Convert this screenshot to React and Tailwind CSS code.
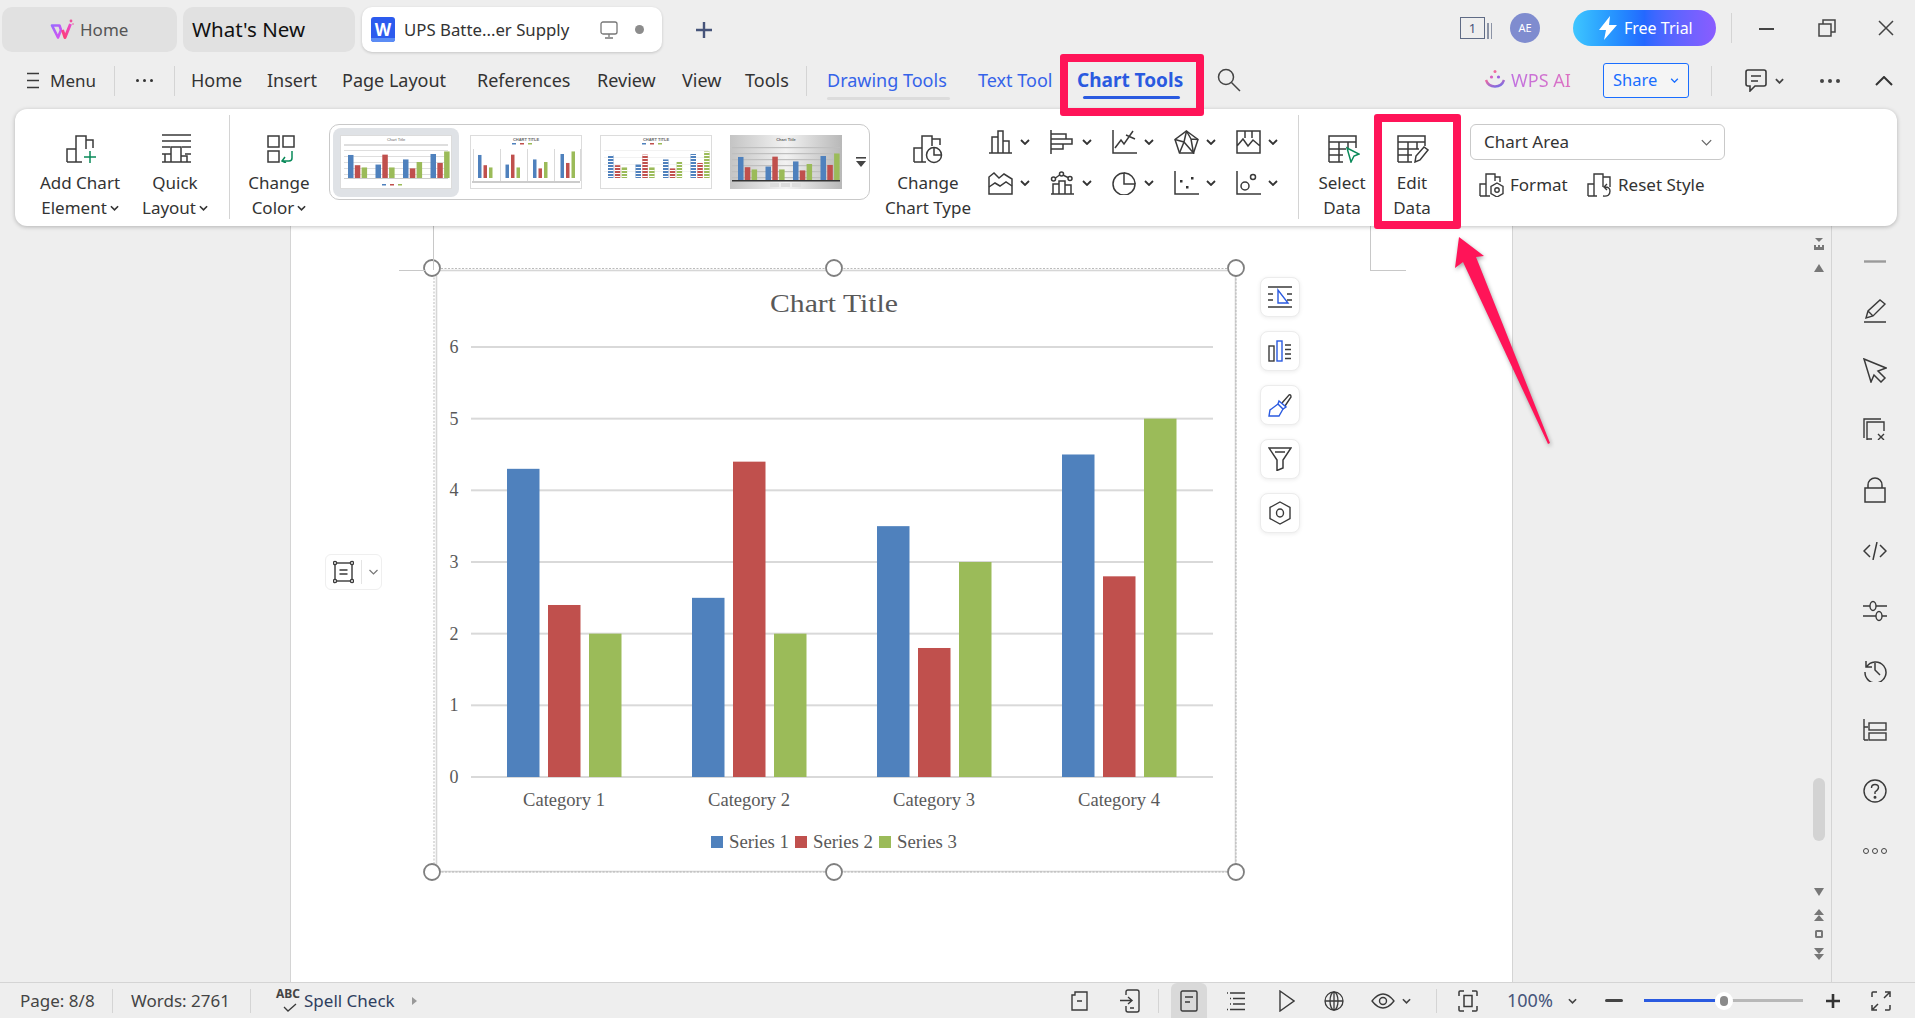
import React from "react";

const S = ({ w, h, children, className = "", stroke = "#3a3a3a", sw = 1.5 }) => (
  <svg width={w} height={h} viewBox={`0 0 ${w} ${h}`} fill="none" stroke={stroke} strokeWidth={sw} className={"shrink-0 " + className}>
    {children}
  </svg>
);
const Chev = ({ c = "#333", w = 10, h = 6, sw = 1.6 }) => (
  <svg width={w} height={h} viewBox="0 0 10 6" fill="none" stroke={c} strokeWidth={sw} className="shrink-0">
    <path d="M1 1l4 4 4-4" />
  </svg>
);

const Big = ({ w, icon, l1, l2, chev }) => (
  <div className={`flex flex-col items-center shrink-0 ${w}`}>
    <div className="h-[36px] flex items-center justify-center">{icon}</div>
    <div className="mt-[3px] text-center leading-[25px] whitespace-nowrap">{l1}</div>
    <div className="flex items-center justify-center gap-[3px] leading-[25px] whitespace-nowrap">
      {l2}
      {chev && <Chev w={9} h={6} sw={1.8} />}
    </div>
  </div>
);

const bars = [
  [0.72, 0.4, 0.33],
  [0.42, 0.73, 0.33],
  [0.58, 0.3, 0.5],
  [0.75, 0.47, 0.83],
];
const Mini = ({ kind }) => {
  const W = 112;
  const H = 54;
  const base = kind === 4 ? 45 : 43;
  const maxH = 32;
  return (
    <svg width={W} height={H} viewBox={`0 0 ${W} ${H}`} className="shrink-0">
      {kind === 4 ? (
        <>
          <defs>
            <linearGradient id="mg" x1="0" y1="0" x2="1" y2="0">
              <stop offset="0" stopColor="#c4c4c4" />
              <stop offset="0.5" stopColor="#f2f2f2" />
              <stop offset="1" stopColor="#b8b8b8" />
            </linearGradient>
          </defs>
          <rect width={W} height={H} fill="url(#mg)" />
        </>
      ) : (
        <rect x="0.5" y="0.5" width={W - 1} height={H - 1} fill="#fff" stroke="#dcdcdc" />
      )}
      <text x={W / 2} y="5.5" fontSize="4" textAnchor="middle" fill="#666" fontFamily="Liberation Sans" fontWeight={kind === 1 ? 400 : 700}>
        {kind === 1 || kind === 4 ? "Chart Title" : "CHART TITLE"}
      </text>
      {kind === 2 || kind === 3 ? (
        <g>
          <rect x="42" y="8" width="4" height="1.5" fill="#4f81bd" />
          <rect x="50" y="8" width="4" height="1.5" fill="#c0504d" />
          <rect x="58" y="8" width="4" height="1.5" fill="#9bbb59" />
        </g>
      ) : null}
      {kind === 1 && [9, 15, 21, 27, 33, 39].map((y) => <rect key={y} x="4" y={y} width={W - 8} height={y < 15 ? 2 : 1} fill="#dedede" />)}
      {kind === 3 && [15, 22, 29, 36].map((y) => <rect key={y} x="4" y={y} width={W - 8} height="0.5" fill="#e4e4e4" />)}
      {kind === 4 && [12, 18, 24, 30, 36, 42].map((y) => <rect key={y} x="2" y={y} width={W - 4} height="1.2" fill="#bfbfbf" />)}
      {kind === 2 && [3, 30, 57, 84, 110].map((x) => <rect key={x} x={x} y="14" width="0.8" height="32" fill="#d0d0d0" />)}
      {kind === 2 && <rect x="2" y="46" width={W - 4} height="2" fill="#ccc" />}
      {bars.map((g, i) => {
        const x0 = 8 + i * 27.5;
        const cols = ["#4f81bd", "#c0504d", "#9bbb59"];
        return g.map((v, j) => {
          const bw = kind === 2 ? 3.5 : 5.5;
          const x = x0 + j * (kind === 2 ? 5.5 : 6.8);
          const h = v * maxH;
          return (
            <g key={j}>
              <rect x={x} y={base - h} width={bw} height={h} fill={cols[j]} />
              {kind === 3 &&
                [2, 5, 8, 11, 14, 17, 20, 23, 26].map((d) =>
                  d < h ? <rect key={d} x={x} y={base - d} width={bw} height="1" fill="#fff" /> : null
                )}
            </g>
          );
        });
      })}
      {kind === 4 && <rect x="2" y="45" width={W - 4} height="1.5" fill="#333" />}
      {kind === 1 && <rect x="4" y="43" width={W - 8} height="1" fill="#ccc" />}
      {kind === 1 && (
        <g>
          <rect x="42" y="49" width="4" height="1.5" fill="#4f81bd" />
          <rect x="50" y="49" width="4" height="1.5" fill="#c0504d" />
          <rect x="58" y="49" width="4" height="1.5" fill="#9bbb59" />
        </g>
      )}
      {kind === 4 && (
        <g>
          <rect x="40" y="48" width="9" height="4" fill="#ddd" />
          <rect x="51" y="48" width="9" height="4" fill="#ddd" />
          <rect x="62" y="48" width="9" height="4" fill="#ddd" />
        </g>
      )}
    </svg>
  );
};

const chartIcons = {
  bar: (
    <S w={25} h={24}>
      <path d="M1 23H24M4 23V7H10V23M10 23V1H15V23M15 23V11H21V23" />
    </S>
  ),
  hbar: (
    <S w={25} h={24}>
      <path d="M1 0V24M1 4H16V9H1M1 9H22V14H1M1 14H13V19H1" />
    </S>
  ),
  line: (
    <S w={25} h={24}>
      <path d="M1 0V23H25M3 18L9 10L12 14L21 1M14 5L23 9" />
    </S>
  ),
  radar: (
    <S w={25} h={24}>
      <path d="M12.5 1L24 9.5L19.5 23H5.5L1 9.5Z" />
      <path d="M12.5 1L10 12L1 9.5M10 12L5.5 23M10 12L19.5 23L17 9L24 9.5M12.5 1L17 9" />
    </S>
  ),
  tree: (
    <S w={25} h={24}>
      <path d="M1 1H24V23H1ZM9 1V8M16 1V8M1 16L7 9L12 16L17 10L24 16" />
    </S>
  ),
  area: (
    <S w={25} h={24}>
      <path d="M1 6L6 2L11 7L16 3L24 8V23H1Z" />
      <path d="M1 16L7 12L12 15L18 11L24 15" />
    </S>
  ),
  combo: (
    <S w={25} h={24}>
      <path d="M1 23H24M3 23V13H9V23M9 23V10H15V23M15 23V14H21V23" />
      <path d="M4 8L11 3L19 7" />
      <circle cx="3.5" cy="8" r="2" fill="#fff" />
      <circle cx="11.5" cy="3" r="2" fill="#fff" />
      <circle cx="20" cy="7.5" r="2" fill="#fff" />
    </S>
  ),
  pie: (
    <S w={25} h={24}>
      <path d="M12 2A11 11 0 1 0 23 13H12Z" />
      <path d="M12 2H13A11 11 0 0 1 23 12V13" />
    </S>
  ),
  scatter: (
    <S w={25} h={24}>
      <path d="M1 0V23H25" />
      <rect x="6" y="9" width="2.5" height="2.5" fill="#333" stroke="none" />
      <rect x="12" y="15" width="2.5" height="2.5" fill="#333" stroke="none" />
      <rect x="17" y="6" width="2.5" height="2.5" fill="#333" stroke="none" />
    </S>
  ),
  bubble: (
    <S w={25} h={24}>
      <path d="M1 0V23H25" />
      <circle cx="9" cy="15" r="4" />
      <circle cx="17" cy="6" r="2.5" />
    </S>
  ),
};

const ChartCell = ({ name }) => (
  <div className="w-[62px] h-[41px] flex items-center pl-[3px] gap-[7px] shrink-0">
    {chartIcons[name]}
    <Chev w={10} h={6} sw={1.8} />
  </div>
);

const FloatBtn = ({ children }) => (
  <div className="w-[40px] h-[40px] rounded-[8px] bg-white border border-[#ececec] shadow-[0_1px_4px_rgba(0,0,0,0.08)] flex items-center justify-center">
    {children}
  </div>
);

const Sep = ({ h = "h-[30px]", ml = "" }) => <div className={`w-px bg-[#d4d4d4] shrink-0 ${h} ${ml}`} />;

const catX = [507, 692, 877, 1062];
const vals = [
  [4.3, 2.4, 2],
  [2.5, 4.4, 2],
  [3.5, 1.8, 3],
  [4.5, 2.8, 5],
];
const cols = ["#4f81bd", "#c0504d", "#9bbb59"];
const y0 = 777;
const step = 71.67;

const Chart = () => {
  const serif = "Liberation Serif, serif";
  return (
    <svg width="830" height="626" viewBox="420 258 830 626" className="shrink-0 ml-[38px] mt-[32px]">
      <rect x="436.5" y="270.5" width="799" height="601" fill="#fff" stroke="#d6d6d6" strokeWidth="1.6" />
      <rect x="434" y="268.5" width="802" height="603.5" fill="none" stroke="#aaa" strokeWidth="0.8" strokeDasharray="2 1.5" />
      <text x="834" y="312" textAnchor="middle" fontFamily={serif} fontSize="26" fill="#595959" textLength="128" lengthAdjust="spacingAndGlyphs">
        Chart Title
      </text>
      {[0, 1, 2, 3, 4, 5, 6].map((n) => (
        <g key={n}>
          <rect x="471" y={y0 - n * step - 1} width="742" height="2" fill="#d9d9d9" />
          <text x="454" y={y0 - n * step + 6} textAnchor="middle" fontFamily={serif} fontSize="18" fill="#595959">
            {n}
          </text>
        </g>
      ))}
      {vals.map((g, i) =>
        g.map((v, j) => (
          <rect key={j} x={catX[i] + j * 41} y={y0 - v * step} width="32.5" height={v * step} fill={cols[j]} />
        ))
      )}
      {catX.map((x, i) => (
        <text key={i} x={x + 57} y="806" textAnchor="middle" fontFamily={serif} fontSize="18" fill="#595959" textLength="82" lengthAdjust="spacingAndGlyphs">
          {"Category " + (i + 1)}
        </text>
      ))}
      {[711, 795, 879].map((x, i) => (
        <g key={i}>
          <rect x={x} y="836" width="12" height="12" fill={cols[i]} />
          <text x={x + 18} y="848" fontFamily={serif} fontSize="18" fill="#595959" textLength="60" lengthAdjust="spacingAndGlyphs">
            {"Series " + (i + 1)}
          </text>
        </g>
      ))}
      {[
        [432, 268],
        [834, 268],
        [1236, 268],
        [432, 872],
        [834, 872],
        [1236, 872],
      ].map(([x, y], i) => (
        <circle key={i} cx={x} cy={y} r="8" fill="#fff" stroke="#7f7f7f" strokeWidth="1.8" />
      ))}
    </svg>
  );
};

export default function App() {
  return (
    <div className="relative w-[1915px] h-[1018px] overflow-hidden bg-[#eeeeee] flex flex-col text-[#333] text-[17px] [font-family:'Noto_Sans',sans-serif]">
      {/* title bar */}
      <div className="h-[56px] shrink-0 flex items-start">
        <div className="ml-[2px] mt-[7px] w-[175px] h-[45px] rounded-[10px] bg-[#e1e1e1] flex items-center pl-[48px] gap-[9px] text-[#555]">
          <svg width="24" height="21" viewBox="0 0 24 21" fill="none" className="shrink-0">
            <defs>
              <linearGradient id="wv" x1="0" y1="0" x2="1" y2="1">
                <stop offset="0" stopColor="#9a6bff" />
                <stop offset="1" stopColor="#d84ff0" />
              </linearGradient>
              <linearGradient id="wp" x1="0" y1="1" x2="1" y2="0">
                <stop offset="0" stopColor="#ff3d6e" />
                <stop offset="1" stopColor="#e84ad0" />
              </linearGradient>
            </defs>
            <path d="M2 6.5H9.5L11 11L8 18.5Z" stroke="url(#wv)" strokeWidth="2.6" strokeLinejoin="round" />
            <path d="M12.5 11L15 18.5L20.5 5" stroke="url(#wp)" strokeWidth="3" strokeLinejoin="round" />
            <circle cx="21" cy="2" r="1.4" fill="#f0509a" />
            <circle cx="23" cy="5" r="0.8" fill="#f0509a" />
          </svg>
          <span className="ml-[-3px]">Home</span>
        </div>
        <div className="ml-[6px] mt-[7px] w-[172px] h-[45px] rounded-[10px] bg-[#e1e1e1] flex items-center pl-[9px] text-[20.5px] text-[#111]">
          What's New
        </div>
        <div className="ml-[7px] mt-[7px] w-[300px] h-[45px] rounded-[10px] bg-white shadow-[0_1px_3px_rgba(0,0,0,0.18)] flex items-center pl-[9px]">
          <div className="relative w-[24px] h-[25px] rounded-[3px] bg-[#2c5bee] text-white text-[17px] font-bold flex items-center justify-center overflow-hidden shrink-0 leading-none">
            W
            <div className="absolute bottom-0 left-0 w-full h-[4px] bg-[#5b8cf5]" />
          </div>
          <span className="ml-[9px] w-[196px] whitespace-nowrap text-[16.8px]">UPS Batte...er Supply</span>
          <S w={18} h={18} stroke="#777" sw={1.3}>
            <rect x="1" y="1" width="16" height="12" rx="2" />
            <path d="M9 13V16M5 17H13" />
          </S>
          <div className="ml-[17px] w-[9px] h-[9px] rounded-full bg-[#8c8c8c]" />
        </div>
        <svg width="16" height="16" viewBox="0 0 16 16" className="ml-[34px] mt-[22px] shrink-0" stroke="#46547a" strokeWidth="2.4">
          <path d="M8 0V16M0 8H16" />
        </svg>
        <div className="ml-[748px] mt-[17px] flex items-end shrink-0">
          <div className="w-[25px] h-[22px] border-[1.5px] border-[#5f6b85] flex items-center justify-center text-[13px] leading-none text-[#46547a]">1</div>
          <div className="w-[1.5px] h-[16px] ml-[2px] bg-[#8b93a5]" />
          <div className="w-[1.5px] h-[16px] ml-[2px] bg-[#8b93a5]" />
        </div>
        <div className="ml-[18px] mt-[13px] w-[30px] h-[30px] rounded-full bg-[#7f8ccf] text-white text-[11px] flex items-center justify-center shrink-0">AE</div>
        <div className="ml-[33px] mt-[10px] w-[143px] h-[36px] rounded-full bg-linear-to-r from-[#3fc6ff] via-[#2468ff] to-[#8a5cff] flex items-center pl-[26px] text-white text-[16px] shrink-0">
          <svg width="18" height="24" viewBox="0 0 18 24" fill="#fff" className="shrink-0">
            <path d="M11 0L0 14H7L5 24L18 9H10Z" />
          </svg>
          <span className="ml-[7px] whitespace-nowrap">Free Trial</span>
        </div>
        <Sep h="h-[30px]" ml="ml-[15px] mt-[13px]" />
        <S w={15} h={2} className="ml-[27px] mt-[28px]" sw={2} stroke="#444">
          <path d="M0 1H15" />
        </S>
        <S w={18} h={18} className="ml-[44px] mt-[19px]" sw={1.5} stroke="#444">
          <rect x="1" y="5" width="12" height="12" />
          <path d="M5 5V1H17V13H13" />
        </S>
        <S w={16} h={16} className="ml-[42px] mt-[20px]" sw={1.5} stroke="#444">
          <path d="M1 1L15 15M15 1L1 15" />
        </S>
      </div>

      {/* menu row */}
      <div className="h-[53px] shrink-0 flex items-center pb-[4px] whitespace-nowrap text-[18px]">
        <S w={14} h={17} className="ml-[26px] mr-[10px]" sw={1.6}>
          <path d="M1 1.5H13M1 8.5H13M1 15.5H13" />
        </S>
        <span className="w-[64px] shrink-0 text-[17px]">Menu</span>
        <Sep />
        <span className="w-[59px] pl-[21px] shrink-0 flex gap-[4px]">
          <i className="w-[3px] h-[3px] rounded-full bg-[#333]" />
          <i className="w-[3px] h-[3px] rounded-full bg-[#333]" />
          <i className="w-[3px] h-[3px] rounded-full bg-[#333]" />
        </span>
        <Sep />
        <span className="ml-[16px] w-[76px] shrink-0">Home</span>
        <span className="w-[75px] shrink-0">Insert</span>
        <span className="w-[135px] shrink-0">Page Layout</span>
        <span className="w-[120px] shrink-0">References</span>
        <span className="w-[85px] shrink-0">Review</span>
        <span className="w-[63px] shrink-0">View</span>
        <span className="w-[61px] shrink-0">Tools</span>
        <Sep />
        <span className="relative ml-[20px] w-[151px] shrink-0 text-[#3563e9]">
          Drawing Tools
          <i className="absolute left-0 top-[30px] w-[123px] h-[3px] rounded-full bg-[#dcdcdc]" />
        </span>
        <span className="w-[99px] shrink-0 text-[#3563e9]">Text Tool</span>
        <span className="relative w-[140px] shrink-0 font-bold text-[19px] text-[#2a5ae0]">
          Chart Tools
          <i className="absolute left-[6px] top-[30px] w-[97px] h-[3px] rounded-full bg-[#2a5ae0]" />
        </span>
        <S w={24} h={24} className="mt-[-2px]" sw={1.5} stroke="#444">
          <circle cx="9" cy="9" r="7.5" />
          <path d="M14.5 14.5L23 23" />
        </S>
        <svg width="24" height="24" viewBox="0 0 24 24" fill="none" className="ml-[242px] shrink-0">
          <defs>
            <linearGradient id="ai" x1="0" y1="0" x2="1" y2="1">
              <stop offset="0" stopColor="#f06aa0" />
              <stop offset="1" stopColor="#6a6cf0" />
            </linearGradient>
          </defs>
          <path d="M3 11A9.5 9.5 0 0 0 21 11" stroke="url(#ai)" strokeWidth="2.4" />
          <circle cx="8.5" cy="8" r="1.6" fill="#d860c0" />
          <circle cx="15.5" cy="8" r="1.6" fill="#a060e0" />
          <circle cx="12" cy="2.5" r="1.5" fill="#f06aa0" />
        </svg>
        <span className="ml-[4px] w-[92px] shrink-0 bg-linear-to-r from-[#c070e0] to-[#ee70b0] bg-clip-text text-transparent">WPS AI</span>
        <div className="w-[86px] h-[35px] shrink-0 rounded-[3px] border border-[#1a6eff] bg-white/40 flex items-center pl-[9px] gap-[13px] text-[#1a6eff] text-[16.5px]">
          Share
          <Chev c="#1a6eff" w={9} h={5} />
        </div>
        <Sep ml="ml-[22px]" h="h-[30px]" />
        <S w={22} h={23} className="ml-[33px]" sw={1.6}>
          <path d="M3 1H19Q21 1 21 3V15Q21 17 19 17H10L5 22V17H3Q1 17 1 15V3Q1 1 3 1ZM6 7H16M6 12H13" />
        </S>
        <span className="ml-[8px] shrink-0">
          <Chev c="#444" w={9} h={6} sw={2} />
        </span>
        <span className="ml-[36px] shrink-0 flex gap-[4px]">
          <i className="w-[4px] h-[4px] rounded-full bg-[#444]" />
          <i className="w-[4px] h-[4px] rounded-full bg-[#444]" />
          <i className="w-[4px] h-[4px] rounded-full bg-[#444]" />
        </span>
        <S w={18} h={10} className="ml-[35px]" sw={2} stroke="#333">
          <path d="M1 9L9 1L17 9" />
        </S>
      </div>

      {/* ribbon */}
      <div className="relative z-10 ml-[15px] w-[1882px] h-[117px] shrink-0 rounded-[12px] bg-white shadow-[0_1px_4px_rgba(0,0,0,0.25)] flex items-start pt-[22px] text-[17px]">
        <div className="ml-[20px] flex gap-[5px] shrink-0">
          <Big
            w="w-[90px]"
            l1="Add Chart"
            l2="Element"
            chev
            icon={
              <S w={32} h={30} sw={1.5} className="ml-[3px]">
                <path d="M1 28V15H10M10 28V2H20V15M20 6H27V14M1 28H16" />
                <path d="M24 17V29M18 23H30" stroke="#0a8a5a" />
              </S>
            }
          />
          <Big
            w="w-[90px]"
            l1="Quick"
            l2="Layout"
            chev
            icon={
              <S w={31} h={30} sw={1.5} className="ml-[3px]">
                <path d="M1 1H30M1 7H30M1 13H9M21 13H30M1 28H30M1 20H5M24 20H30M4 28V20H10V13H20V22H26V28M10 20V28M20 22V28" />
              </S>
            }
          />
        </div>
        <Sep h="h-[104px]" ml="ml-[9px] mt-[-16px]" />
        <div className="ml-[9px] shrink-0">
          <Big
            w="w-[80px]"
            l1="Change"
            l2="Color"
            chev
            icon={
              <S w={28} h={28} sw={1.5} className="ml-[3px]">
                <rect x="1" y="1" width="11" height="11" />
                <rect x="16" y="1" width="11" height="11" />
                <rect x="1" y="16" width="11" height="11" />
                <path d="M25 16V23Q25 26 22 26H15M18 22L15 26L19 28" stroke="#0a8a5a" />
              </S>
            }
          />
        </div>
        <div className="ml-[10px] mt-[-7px] w-[541px] h-[76px] shrink-0 rounded-[10px] border border-[#c9c9c9] flex items-center pl-[3px] relative">
          <div className="w-[126px] h-[69px] rounded-[8px] bg-[#dfe2e6] flex items-center justify-center shrink-0">
            <Mini kind={1} />
          </div>
          <div className="ml-[11px] flex gap-[18px] shrink-0">
            <Mini kind={2} />
            <Mini kind={3} />
          </div>
          <div className="ml-[18px] shrink-0">
            <Mini kind={4} />
          </div>
          <svg width="10" height="10" viewBox="0 0 10 10" className="ml-[14px] shrink-0" fill="#444">
            <rect x="0" y="0" width="10" height="1.6" />
            <path d="M0 4H10L5 10Z" />
          </svg>
        </div>
        <div className="ml-[8px] shrink-0">
          <Big
            w="w-[100px]"
            l1="Change"
            l2="Chart Type"
            icon={
              <S w={30} h={30} sw={1.5}>
                <path d="M1 28V14H9M9 28V2H19V12M19 5H27V11M1 28H13" />
                <circle cx="21" cy="21" r="7.5" />
                <path d="M21 14V21H28" />
              </S>
            }
          />
        </div>
        <div className="ml-[7px] mt-[-10px] grid grid-cols-[repeat(5,62px)] shrink-0">
          {["bar", "hbar", "line", "radar", "tree", "area", "combo", "pie", "scatter", "bubble"].map((n) => (
            <ChartCell key={n} name={n} />
          ))}
        </div>
        <Sep h="h-[104px]" ml="ml-[3px] mt-[-16px]" />
        <div className="ml-[8px] flex shrink-0">
          <Big
            w="w-[70px]"
            l1="Select"
            l2="Data"
            icon={
              <S w={32} h={28} sw={1.5} className="ml-[4px]">
                <path d="M1 27V1H28V13M1 7H28M1 14H18M1 20H15M1 27H15M11 7V27M20 7V13" />
                <path d="M19 13L31 19L26 21L23 27Z" stroke="#0a8a5a" />
              </S>
            }
          />
          <Big
            w="w-[70px]"
            l1="Edit"
            l2="Data"
            icon={
              <S w={32} h={28} sw={1.5} className="ml-[2px]">
                <path d="M1 27V1H28V11M1 7H28M1 14H22M1 20H15M1 27H15M11 7V27M20 7V14" />
                <path d="M18 27L19 21L27 12L31 15L23 25Z" />
              </S>
            }
          />
        </div>
        <div className="ml-[23px] w-[255px] mt-[-7px] shrink-0 flex flex-col">
          <div className="h-[36px] rounded-[6px] border border-[#c9c9c9] flex items-center pl-[13px] pr-[11px] justify-between">
            Chart Area
            <Chev c="#666" w={13} h={7} sw={1.1} />
          </div>
          <div className="mt-[12px] flex items-center whitespace-nowrap">
            <S w={26} h={24} className="ml-[9px]" sw={1.4}>
              <path d="M1 23V11H7M7 23V1H16V8M16 4H21V9M1 23H11" />
              <path d="M18 10L24 13.5V20.5L18 24L12 20.5V13.5Z" />
              <circle cx="18" cy="17" r="2.2" />
            </S>
            <span className="ml-[5px] w-[77px] shrink-0">Format</span>
            <S w={26} h={24} sw={1.4}>
              <path d="M1 23V11H7M7 23V1H16V14M16 4H23V14M1 23H10" />
              <path d="M16 23Q23 24 23 18Q23 14 18 14M20 11L17 14L20 17" />
            </S>
            <span className="ml-[5px]">Reset Style</span>
          </div>
        </div>
      </div>

      {/* body */}
      <div className="flex-1 min-h-0 flex">
        <div className="w-[290px] shrink-0" />
        <div className="relative w-[1223px] shrink-0 bg-white border-x border-[#d4d4d4] flex items-start pl-[34px]">
          <div className="mt-[328px] w-[57px] h-[36px] shrink-0 rounded-[6px] border border-[#efefef] bg-white flex items-center pl-[7px]">
            <S w={21} h={24} sw={1.4}>
              <rect x="2" y="3" width="17" height="18" />
              <path d="M6.5 10H14.5M6.5 14H14.5" />
              <circle cx="2" cy="3" r="1.6" fill="#fff" />
              <circle cx="19" cy="3" r="1.6" fill="#fff" />
              <circle cx="2" cy="21" r="1.6" fill="#fff" />
              <circle cx="19" cy="21" r="1.6" fill="#fff" />
            </S>
            <div className="ml-[7px] w-px h-[24px] bg-[#e4e4e4]" />
            <span className="ml-[6px]">
              <Chev c="#777" w={11} h={6} sw={1.2} />
            </span>
          </div>
          <Chart />
          <div className="ml-[10px] mt-[51px] flex flex-col gap-[14px] shrink-0">
            <FloatBtn>
              <S w={26} h={22} sw={1.4}>
                <path d="M1 1H25M1 21H25M1 8H6M1 14H6M20 8H25M20 14H25" />
                <path d="M11 4V17H21Z" stroke="#2a5ae0" />
              </S>
            </FloatBtn>
            <FloatBtn>
              <S w={24} h={22} sw={1.4}>
                <rect x="1" y="6" width="5" height="15" />
                <rect x="9" y="1" width="5" height="20" stroke="#2a5ae0" />
                <path d="M17 5H23M17 9.5H23M17 14H23M17 18.5H23" />
              </S>
            </FloatBtn>
            <FloatBtn>
              <S w={24} h={24} sw={1.4}>
                <path d="M14 10L21 2Q23 1 23 4L17 13" />
                <path d="M11 8L18 14L15 16L10 11Z" stroke="#2a5ae0" />
                <path d="M10 11L2 17L1 23H11L15 16" stroke="#2a5ae0" />
              </S>
            </FloatBtn>
            <FloatBtn>
              <S w={24} h={24} sw={1.5}>
                <path d="M1 1H23L15 13V21L9 23.5V13Z" />
                <path d="M7 5H17" />
              </S>
            </FloatBtn>
            <FloatBtn>
              <S w={22} h={24} sw={1.4}>
                <path d="M11 1L21 6.5V17.5L11 23L1 17.5V6.5Z" />
                <ellipse cx="11" cy="12" rx="3.5" ry="4" />
              </S>
            </FloatBtn>
          </div>
          {/* crop marks */}
          <div className="absolute left-[142px] top-0 w-px h-[44px] bg-[#c8c8c8]" />
          <div className="absolute left-[108px] top-[44px] w-[26px] h-px bg-[#c8c8c8]" />
          <div className="absolute left-[1079px] top-0 w-px h-[44px] bg-[#c8c8c8]" />
          <div className="absolute left-[1079px] top-[44px] w-[36px] h-px bg-[#c8c8c8]" />
        </div>
        {/* right rail */}
        <div className="ml-[318px] w-[84px] shrink-0 border-l border-[#d4d4d4] flex flex-col items-center pl-[2px] pt-[34px]">
          <S w={22} h={3} sw={2.4} stroke="#9a9a9a">
            <path d="M0 1.5H22" />
          </S>
          <S w={24} h={24} className="mt-[36px]" sw={1.4}>
            <path d="M1 23H23M3 19L5 12L17 1L22 5L10 17ZM5 12L10 17" />
          </S>
          <S w={24} h={25} className="mt-[35px]" sw={1.5}>
            <path d="M1 1L23 10L15 13L22 20L18 24L11 17L8 24Z" />
          </S>
          <S w={24} h={22} className="mt-[35px]" sw={1.4}>
            <path d="M1 20V1H18M4 22V4H21V13M4 21H9M15 16L21 22M21 16L15 22" />
          </S>
          <S w={22} h={26} className="mt-[37px]" sw={1.5}>
            <rect x="1" y="11" width="20" height="14" />
            <path d="M4 11V8A7 7 0 0 1 18 8V11" />
          </S>
          <S w={24} h={18} className="mt-[39px]" sw={1.5}>
            <path d="M7 3L1 9L7 15M17 3L23 9L17 15M14 0L10 18" />
          </S>
          <S w={24} h={24} className="mt-[39px]" sw={1.4}>
            <path d="M0 7H7M13 7H24M0 17H13M19 17H24" />
            <ellipse cx="10" cy="7" rx="3" ry="4.5" />
            <ellipse cx="16" cy="17" rx="3" ry="4.5" />
          </S>
          <S w={24} h={24} className="mt-[35px]" sw={1.5}>
            <path d="M3 3V9H9M3.5 9A10.5 10.5 0 1 1 2 14M12 5V12L17 17" />
          </S>
          <S w={24} h={24} className="mt-[37px]" sw={1.4}>
            <path d="M1 0V21M1 8H5M1 21H5" />
            <rect x="6" y="4" width="17" height="7" />
            <rect x="6" y="14" width="17" height="7" />
          </S>
          <S w={24} h={24} className="mt-[36px]" sw={1.4}>
            <circle cx="12" cy="12" r="11" />
            <path d="M8.5 9Q8.5 5.5 12 5.5Q15.5 5.5 15.5 8.5Q15.5 10.5 12 13V15" />
            <circle cx="12" cy="18.3" r="0.8" fill="#333" />
          </S>
          <div className="mt-[45px] flex gap-[3px]">
            <i className="w-[6px] h-[6px] rounded-full border border-[#444]" />
            <i className="w-[6px] h-[6px] rounded-full border border-[#444]" />
            <i className="w-[6px] h-[6px] rounded-full border border-[#444]" />
          </div>
        </div>
      </div>

      {/* scrollbar bits */}
      <div className="absolute z-0 left-[1812px] top-[238px] w-[14px] text-[#777] flex flex-col items-center">
        <svg width="12" height="12" viewBox="0 0 12 12" fill="#777">
          <path d="M2 0H10L6 4Z" />
          <rect x="1" y="9" width="10" height="3" />
          <rect x="1" y="7" width="2" height="2" />
          <rect x="5" y="7" width="2" height="2" />
          <rect x="9" y="7" width="2" height="2" />
        </svg>
        <svg width="10" height="8" viewBox="0 0 10 8" fill="#777" className="mt-[14px]">
          <path d="M5 0L10 8H0Z" />
        </svg>
        <div className="mt-[506px] w-[12px] h-[63px] rounded-full bg-[#d3d3d3]" />
        <svg width="10" height="8" viewBox="0 0 10 8" fill="#777" className="mt-[47px]">
          <path d="M0 0H10L5 8Z" />
        </svg>
        <svg width="10" height="13" viewBox="0 0 10 13" fill="#777" className="mt-[13px]">
          <path d="M5 0L10 6H0ZM5 6L10 12H0Z" />
        </svg>
        <div className="mt-[8px] w-[8px] h-[8px] rounded-[1.5px] border-2 border-[#777]" />
        <svg width="10" height="13" viewBox="0 0 10 13" fill="#777" className="mt-[10px]">
          <path d="M0 0H10L5 6ZM0 6H10L5 12Z" />
        </svg>
      </div>

      {/* status bar */}
      <div className="h-[36px] shrink-0 border-t border-[#d4d4d4] flex items-center whitespace-nowrap text-[17px] text-[#444]">
        <span className="ml-[20px] w-[92px] shrink-0">Page: 8/8</span>
        <Sep h="h-[24px]" />
        <span className="ml-[18px] w-[119px] shrink-0">Words: 2761</span>
        <Sep h="h-[24px]" />
        <div className="ml-[25px] w-[28px] h-[30px] relative shrink-0">
          <span className="absolute left-0 top-[1px] text-[12px] leading-[14px] font-bold text-[#444]">ABC</span>
          <S w={14} h={9} className="absolute left-[7px] top-[17px]" sw={1.3}>
            <path d="M1 4L5 8L13 1" />
          </S>
        </div>
        <span className="w-[108px] shrink-0 text-[#2f3f60]">Spell Check</span>
        <svg width="5" height="8" viewBox="0 0 5 8" fill="#999" className="shrink-0">
          <path d="M0 0L5 4L0 8Z" />
        </svg>
        <S w={17} h={20} className="ml-[654px]" sw={1.4}>
          <path d="M4 1H16V19H1V4H4ZM4 4V1M6 10H11" />
        </S>
        <S w={22} h={24} className="ml-[31px]" sw={1.4}>
          <path d="M7 6V3Q7 1 9 1H18Q20 1 20 3V21Q20 23 18 23H9Q7 23 7 21V17M1 11.5H12M9 8L13 11.5L9 15M11 19H15" />
        </S>
        <Sep h="h-[24px]" ml="ml-[17px]" />
        <div className="ml-[12px] w-[36px] h-[35px] rounded-t-[6px] bg-[#d9d9d9] flex items-center justify-center shrink-0">
          <S w={18} h={22} sw={1.4}>
            <rect x="1" y="1" width="16" height="20" rx="1.5" />
            <path d="M5 7H13M5 12H10" />
          </S>
        </div>
        <S w={20} h={20} className="ml-[19px]" sw={1.6}>
          <path d="M4 2H19M1 2H2M7 7.5H19M4 7.5H5M7 13H19M4 13H5M4 18.5H19M1 18.5H2" />
        </S>
        <S w={16} h={22} className="ml-[33px]" sw={1.4}>
          <path d="M1 1L15 11L1 21Z" />
        </S>
        <S w={20} h={20} className="ml-[29px]" sw={1.3}>
          <circle cx="10" cy="10" r="9" />
          <ellipse cx="10" cy="10" rx="4" ry="9" />
          <path d="M1 10H19M10 1V19" />
        </S>
        <S w={24} h={20} className="ml-[27px]" sw={1.4}>
          <path d="M1 10Q12 -4 23 10Q12 24 1 10Z" strokeLinejoin="round" />
          <circle cx="12" cy="10" r="3.5" />
        </S>
        <span className="ml-[7px] shrink-0">
          <Chev c="#444" w={9} h={6} sw={1.8} />
        </span>
        <Sep h="h-[24px]" ml="ml-[25px]" />
        <S w={20} h={22} className="ml-[21px]" sw={1.5}>
          <path d="M1 6V2Q1 1 2 1H6M14 1H18Q19 1 19 2V6M19 16V20Q19 21 18 21H14M6 21H2Q1 21 1 20V16" />
          <rect x="6" y="5.5" width="8" height="11" />
        </S>
        <span className="ml-[29px] w-[61px] shrink-0 text-[18px] text-[#46547a]">100%</span>
        <Chev c="#444" w={9} h={6} sw={1.8} />
        <div className="ml-[28px] w-[18px] h-[3px] rounded-full bg-[#444] shrink-0" />
        <div className="relative ml-[21px] w-[159px] h-[3px] shrink-0 bg-[#b8b8b8]">
          <div className="h-full w-[71px] bg-[#2a5ae0]" />
          <div className="absolute left-[71px] top-[-7px] w-[18px] h-[18px] rounded-full bg-white flex items-center justify-center">
            <i className="w-[8px] h-[10px] rounded-full bg-[#8a8a8a]" />
          </div>
        </div>
        <svg width="16" height="16" viewBox="0 0 16 16" className="ml-[22px] shrink-0" stroke="#333" strokeWidth="2.6">
          <path d="M8 1V15M1 8H15" />
        </svg>
        <S w={20} h={20} className="ml-[30px]" sw={1.5}>
          <path d="M1 6V2Q1 1 2 1H6M14 1H19V6M19 14V18Q19 19 18 19H14M6 19H1V14M13 7L18 2M7 13L2 18" />
        </S>
      </div>

      {/* annotation overlays */}
      <div className="absolute z-20 left-[1060px] top-[54px] w-[144px] h-[62px] border-[8px] border-[#ff1458] rounded-[3px]" />
      <div className="absolute z-20 left-[1374px] top-[114px] w-[87px] h-[115px] border-[8px] border-[#ff1458] rounded-[3px]" />
      <svg width="110" height="230" viewBox="1450 230 110 230" className="absolute z-20 left-[1450px] top-[230px] drop-shadow-[1px_2px_2px_rgba(0,0,0,0.35)]">
        <path d="M1459 237L1484 256L1476 257L1550 443L1548 444L1463 262L1455 268Z" fill="#ff1458" />
      </svg>
    </div>
  );
}
